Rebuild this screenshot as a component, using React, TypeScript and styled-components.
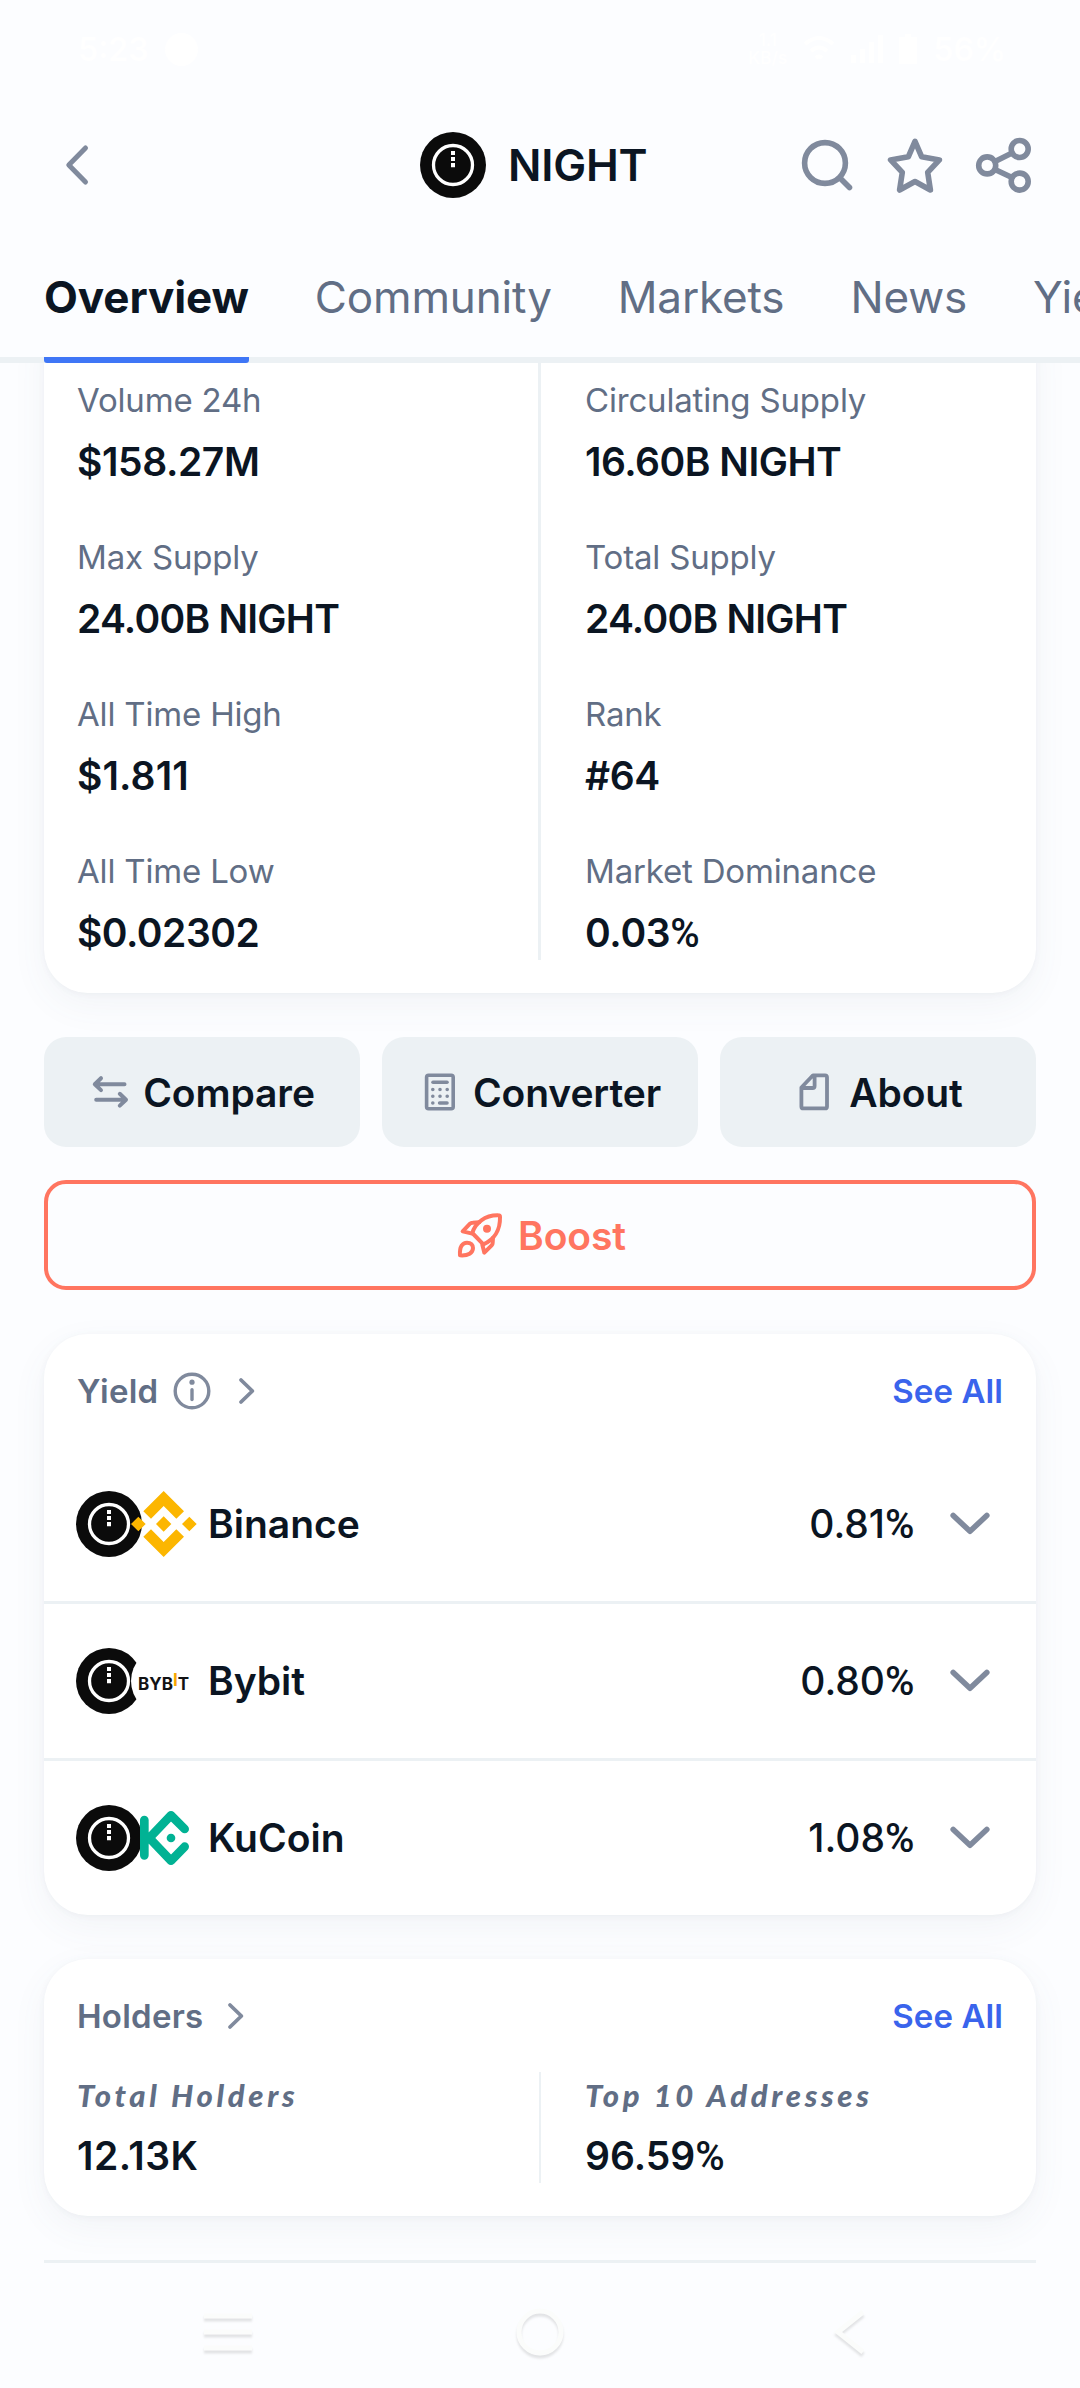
import React from "react";
import styled, { createGlobalStyle } from "styled-components";

const ink = "#0b1522";
const slate = "#616e85";
const iconGrey = "#808a9d";
const line = "#ecf1f4";
const blue = "#3a64ec";
const coral = "#ff7560";
const page = "#fcfdff";

const GlobalStyle = createGlobalStyle`
  *, *::before, *::after { box-sizing: border-box; }
  body {
    margin: 0;
    background: ${page};
    font-family: Inter, "Liberation Sans", sans-serif;
    color: ${ink};
  }
  svg { display: block; flex: none; }
`;

const Screen = styled.div`
  width: 1080px;
  height: 2388px;
  display: flex;
  flex-direction: column;
  overflow: hidden;
  background: ${page};
`;

const StatusBar = styled.div`
  height: 88px;
  flex: none;
  padding: 10px 74px 0 78px;
  display: flex;
  justify-content: space-between;
  align-items: center;
  color: #ffffff;
  font-size: 32px;
  font-weight: 600;
`;

const StatusGroup = styled.div`
  display: flex;
  align-items: center;
  gap: 16px;
`;

const StatusBadge = styled.span`
  width: 33px;
  height: 33px;
  border-radius: 50%;
  background: #ffffff;
`;

const NetSpeed = styled.span`
  display: flex;
  flex-direction: column;
  align-items: center;
  font-size: 17px;
  line-height: 18px;
`;

const Header = styled.header`
  height: 154px;
  flex: none;
  display: grid;
  grid-template-columns: 420px 1fr auto;
  align-items: center;
  padding-right: 44px;
`;

const BackButton = styled.div`
  padding-left: 62px;
`;

const Title = styled.div`
  display: flex;
  align-items: center;
  gap: 22px;
  font-size: 44px;
  font-weight: 600;
  line-height: 60px;
  letter-spacing: -0.2px;
`;

const HeaderActions = styled.div`
  display: flex;
  gap: 22px;
`;

const Tabs = styled.nav`
  height: 121px;
  flex: none;
  display: flex;
  gap: 66px;
  padding: 25px 0 0 44px;
  border-bottom: 6px solid ${line};
  white-space: nowrap;
`;

const Tab = styled.div<{ $active?: boolean }>`
  flex: none;
  height: 96px;
  font-size: 44px;
  line-height: 60px;
  letter-spacing: ${(p) => (p.$active ? "-0.1px" : "-0.15px")};
  font-weight: ${(p) => (p.$active ? 700 : 400)};
  color: ${(p) => (p.$active ? ink : slate)};
  border-bottom: 6px solid ${(p) => (p.$active ? "#3f76f6" : "transparent")};
  border-radius: 3px;
`;

const Body = styled.main`
  flex: none;
  height: 1900px;
  overflow: hidden;
  padding: 0 44px;
  display: flex;
  flex-direction: column;
`;

const Card = styled.section`
  flex: none;
  background: #ffffff;
  border-radius: 44px;
  box-shadow: 0 12px 36px rgba(88, 102, 126, 0.06), 0 1px 6px rgba(88, 102, 126, 0.06);
`;

const StatsCard = styled(Card)`
  margin-top: -60px;
  height: 690px;
  padding: 60px 0 33px;
  display: grid;
  grid-template-columns: 494px 1fr;
`;

const StatsColumn = styled.div<{ $divided?: boolean }>`
  padding: 15px 0 0 ${(p) => (p.$divided ? "44px" : "33px")};
  border-left: ${(p) => (p.$divided ? `3px solid ${line}` : "none")};
  display: flex;
  flex-direction: column;
  gap: 47px;
`;

const Stat = styled.div`
  display: flex;
  flex-direction: column;
  gap: 14px;
`;

const StatLabel = styled.div`
  font-size: 33px;
  line-height: 44px;
  letter-spacing: -0.18px;
  color: ${slate};
`;

const StatValue = styled.div<{ $track: number }>`
  font-size: 39px;
  line-height: 52px;
  font-weight: 600;
  letter-spacing: ${(p) => p.$track}px;
`;

const PercentSign = styled.span`
  font-family: Roboto, Inter, sans-serif;
  font-size: 40px;
  line-height: 1;
  font-weight: 500;
  letter-spacing: -0.5px;
`;

const Actions = styled.div`
  flex: none;
  display: grid;
  grid-template-columns: repeat(3, 316px);
  gap: 22px;
  margin-top: 44px;
`;

const ActionButton = styled.div<{ $gap: number }>`
  height: 110px;
  border-radius: 22px;
  background: ${line};
  display: flex;
  align-items: center;
  justify-content: center;
  gap: ${(p) => p.$gap}px;
  padding-left: ${(p) => p.$gap - 12}px;
  font-size: 39px;
  line-height: 52px;
  font-weight: 600;
`;

const ActionLabel = styled.span`
  padding-top: 2px;
  letter-spacing: -0.1px;
`;

const BoostButton = styled(ActionButton)`
  flex: none;
  margin-top: 33px;
  background: ${page};
  border: 4px solid ${coral};
  color: ${coral};
`;

const YieldCard = styled(Card)`
  margin-top: 44px;
  height: 581px;
`;

const CardHead = styled.div`
  height: 113px;
  padding: 0 33px;
  display: flex;
  align-items: center;
  justify-content: space-between;
  font-size: 33px;
  line-height: 44px;
  font-weight: 600;
  color: ${slate};
`;

const HeadTitle = styled.div`
  display: flex;
  align-items: center;
  letter-spacing: 0.25px;
`;

const SeeAll = styled.div`
  color: ${blue};
  letter-spacing: 0.1px;
`;

const YieldRow = styled.div`
  height: 157px;
  display: flex;
  align-items: center;
  padding: 0 44px 0 32px;
  border-bottom: 3px solid ${line};
  font-size: 39px;
  line-height: 52px;
  font-weight: 500;
  &:last-child { border-bottom-color: transparent; }
`;

const LogoPair = styled.div`
  display: flex;
  width: 121px;
  margin-right: 11px;
  & > :last-child { margin-left: -11px; }
`;

const ExchangeName = styled.div`
  flex: 1;
  font-weight: 600;
`;

const Rate = styled.div`
  margin-right: 34px;
`;

const BybitMark = styled.div`
  width: 66px;
  height: 66px;
  flex: none;
  border-radius: 50%;
  background: #ffffff;
  display: flex;
  align-items: center;
  padding: 5px 0 0 7px;
  color: #121214;
  font-size: 17px;
  line-height: 20px;
  font-weight: 700;
  letter-spacing: 0;
`;

const BybitAccent = styled.span`
  color: #f7a600;
  transform: translateY(-4px);
`;

const HoldersCard = styled(Card)`
  margin-top: 44px;
  height: 257px;
`;

const HoldersGrid = styled.div`
  display: grid;
  grid-template-columns: 495px 1fr;
  height: 111px;
`;

const HoldersCell = styled.div<{ $divided?: boolean }>`
  padding: 0 0 0 ${(p) => (p.$divided ? "44px" : "33px")};
  border-left: ${(p) => (p.$divided ? `2px solid ${line}` : "none")};
`;

const HoldersLabel = styled.div`
  font-family: Lato, "Open Sans", sans-serif;
  font-style: italic;
  font-weight: 900;
  font-size: 31px;
  line-height: 44px;
  letter-spacing: 3.7px;
  color: ${slate};
  padding-top: 1px;
`;

const HoldersValue = styled.div<{ $track: number }>`
  font-size: 39px;
  line-height: 52px;
  font-weight: 600;
  letter-spacing: ${(p) => p.$track}px;
  margin-top: 13px;
`;

const EndRule = styled.div`
  flex: none;
  height: 3px;
  margin-top: 44px;
  background: ${line};
`;

const SystemNav = styled.footer`
  flex: 1;
  display: flex;
  justify-content: space-between;
  align-items: center;
  padding: 12px 198px 0;
  svg { filter: drop-shadow(0 3px 1px rgba(0, 0, 0, 0.1)); }
`;

const Coin = () => (
  <svg width="66" height="66" viewBox="0 0 66 66">
    <circle cx="33" cy="33" r="33" fill="#0b0b0b" />
    <circle cx="33" cy="33" r="19.5" fill="none" stroke="#fff" strokeWidth="3.3" />
    <path d="M31 19h4v4h-4zM31 25h4v4h-4zM31 31h4v4.2h-4z" fill="#fff" />
  </svg>
);

const strokeProps = {
  fill: "none",
  stroke: iconGrey,
  strokeLinecap: "round" as const,
  strokeLinejoin: "round" as const,
};

const BackIcon = () => (
  <svg width="30" height="44" viewBox="0 0 30 44" {...strokeProps} strokeWidth="5">
    <path d="M23.5 5L6.8 22l16.7 17" />
  </svg>
);

const SearchIcon = () => (
  <svg width="66" height="66" viewBox="0 0 66 66" {...strokeProps} strokeWidth="5.6">
    <circle cx="31" cy="31" r="20.4" />
    <path d="M46.5 46.5l9 9" />
  </svg>
);

const StarIcon = () => (
  <svg width="66" height="66" viewBox="0 0 66 66" {...strokeProps} strokeWidth="5.6">
    <path d="M33 9.3L39.7 24.8L57.4 27.9L45.7 40.4L48.4 58L33 49.5L17.6 58L20.3 40.4L8.6 27.9L26.3 24.8Z" />
  </svg>
);

const ShareIcon = () => (
  <svg width="66" height="66" viewBox="0 0 66 66" {...strokeProps} strokeWidth="5.6">
    <circle cx="49.7" cy="17" r="8.5" />
    <circle cx="17.2" cy="33.4" r="8.5" />
    <circle cx="49.7" cy="49.6" r="8.5" />
    <path d="M25 29.4L42 21M25 37.4L42 45.6" />
  </svg>
);

const CompareIcon = () => (
  <svg width="42" height="38" viewBox="0 0 42 38" {...strokeProps} strokeWidth="4">
    <path d="M35.5 11.3H5.8M12 5.2L5.8 11.3L12 17.1M7.2 26.7H37M30.8 20.8L37 26.7L30.8 32.6" />
  </svg>
);

const CalculatorIcon = () => (
  <svg width="38" height="38" viewBox="0 0 38 38" {...strokeProps} strokeWidth="3.6">
    <rect x="5.6" y="2.2" width="26.6" height="33.6" rx="2" />
    <path d="M12 9.2H26" />
    <path d="M11.8 16.5h.01M19 16.5h.01M26.2 16.5h.01M11.8 23.3h.01M19 23.3h.01M26.2 23.3h.01M11.8 30h.01M18.6 30h7.4" />
  </svg>
);

const PageIcon = () => (
  <svg width="38" height="38" viewBox="0 0 38 38" {...strokeProps} strokeWidth="3.8">
    <path d="M17 2.3H29a2 2 0 0 1 2 2V33.4a2 2 0 0 1-2 2H7.4a2 2 0 0 1-2-2V14.5ZM18.6 3V13a2 2 0 0 1-2 2H6" />
  </svg>
);

const RocketIcon = () => (
  <svg
    width="46"
    height="46"
    viewBox="50 453 138 138"
    fill="none"
    stroke={coral}
    strokeWidth="12"
    strokeLinecap="round"
    strokeLinejoin="round"
  >
    <path d="M96 516C104 486 134 462 174 463Q179 463 179 468C180 506 162 536 129 550Z" />
    <path d="M117 484L97 485Q92 485 89 488L67 511L96 518M158 530L157 546Q157 550 154 553L132 575L126 551" />
    <path d="M59 583C57 556 67 545 80 545C92 545 98 552 98 561C98 575 84 585 59 583Z" />
    <circle cx="140" cy="503" r="6" fill={coral} />
  </svg>
);

const InfoIcon = () => (
  <svg width="38" height="38" viewBox="0 0 38 38" {...strokeProps} strokeWidth="3.4">
    <circle cx="19" cy="19" r="16.8" />
    <path d="M19 17.8V27.5" />
    <circle cx="19" cy="10.2" r="2.6" fill={iconGrey} stroke="none" />
  </svg>
);

const ChevronRight = () => (
  <svg width="20" height="30" viewBox="0 0 20 30" {...strokeProps} strokeWidth="3.8">
    <path d="M4 4L15.4 15L4 26" />
  </svg>
);

const ChevronDown = () => (
  <svg width="44" height="30" viewBox="0 0 44 30" {...strokeProps} strokeWidth="5.6">
    <path d="M5.2 6.5L22 22.3L38.8 6.5" />
  </svg>
);

const BinanceLogo = () => (
  <svg width="66" height="66" viewBox="213 63 198 198" fill="#fcb600">
    <path d="M311 63L372 124L349 146L311 108L273 146L250 124ZM311 261L372 200L349 178L311 216L273 178L250 200Z" />
    <path d="M311 139L334 162L311 185L288 162ZM235 140L257 162L235 184L213 162ZM388 140L410 162L388 184L366 162Z" />
  </svg>
);

const KucoinLogo = () => (
  <svg
    width="66"
    height="66"
    viewBox="213 1005 198 198"
    fill="none"
    stroke="#01b294"
    strokeWidth="26"
    strokeLinecap="round"
    strokeLinejoin="round"
  >
    <path d="M253 1050V1156M374 1077L333 1036L268 1104L333 1172L374 1130" />
    <circle cx="333" cy="1104" r="13" fill="#01b294" stroke="none" />
  </svg>
);

const BybitLogo = () => (
  <BybitMark>
    <span>BYB</span>
    <BybitAccent>I</BybitAccent>
    <span>T</span>
  </BybitMark>
);

const WifiIcon = () => (
  <svg width="32" height="28" viewBox="0 0 32 28" fill="none" stroke="#fff" strokeWidth="4">
    <path d="M2 9Q16-3 30 9M8 16Q16 9 24 16M13 23Q16 20 19 23" />
  </svg>
);

const SignalIcon = () => (
  <svg width="32" height="28" viewBox="0 0 32 28" fill="#fff">
    <path d="M0 20h5v8H0zM9 14h5v14H9zM18 7h5v21h-5zM27 0h5v28h-5z" />
  </svg>
);

const BatteryIcon = () => (
  <svg width="18" height="30" viewBox="0 0 18 30" fill="#fff">
    <path d="M6 0h6v3h6v27H0V3h6z" />
  </svg>
);

const Figure = ({ text }: { text: string }) =>
  text.endsWith("%") ? (
    <>
      {text.slice(0, -1)}
      <PercentSign>%</PercentSign>
    </>
  ) : (
    <>{text}</>
  );

type StatItem = { label: string; value: string; track: number };

const tabs = ["Overview", "Community", "Markets", "News", "Yield"];

const leftStats: StatItem[] = [
  { label: "Volume 24h", value: "$158.27M", track: -0.4 },
  { label: "Max Supply", value: "24.00B NIGHT", track: -0.75 },
  { label: "All Time High", value: "$1.811", track: 0.1 },
  { label: "All Time Low", value: "$0.02302", track: -0.5 },
];

const rightStats: StatItem[] = [
  { label: "Circulating Supply", value: "16.60B NIGHT", track: -0.5 },
  { label: "Total Supply", value: "24.00B NIGHT", track: -0.75 },
  { label: "Rank", value: "#64", track: -0.4 },
  { label: "Market Dominance", value: "0.03%", track: -0.3 },
];

const yields = [
  { name: "Binance", rate: "0.81%", Logo: BinanceLogo },
  { name: "Bybit", rate: "0.80%", Logo: BybitLogo },
  { name: "KuCoin", rate: "1.08%", Logo: KucoinLogo },
];

const Spacer = styled.span<{ $w: number }>`
  width: ${(p) => p.$w}px;
`;

const renderStats = (stats: StatItem[]) =>
  stats.map(({ label, value, track }) => (
    <Stat key={label}>
      <StatLabel>{label}</StatLabel>
      <StatValue $track={track}>
        <Figure text={value} />
      </StatValue>
    </Stat>
  ));

export default function App() {
  return (
    <Screen>
      <GlobalStyle />
      <StatusBar>
        <StatusGroup>
          <span>5:23</span>
          <StatusBadge />
        </StatusGroup>
        <StatusGroup>
          <NetSpeed>
            <span>1.1</span>
            <span>KB/s</span>
          </NetSpeed>
          <WifiIcon />
          <SignalIcon />
          <BatteryIcon />
          <span>56%</span>
        </StatusGroup>
      </StatusBar>

      <Header>
        <BackButton>
          <BackIcon />
        </BackButton>
        <Title>
          <Coin />
          <span>NIGHT</span>
        </Title>
        <HeaderActions>
          <SearchIcon />
          <StarIcon />
          <ShareIcon />
        </HeaderActions>
      </Header>

      <Tabs>
        {tabs.map((t, i) => (
          <Tab key={t} $active={i === 0}>
            {t}
          </Tab>
        ))}
      </Tabs>

      <Body>
        <StatsCard>
          <StatsColumn>{renderStats(leftStats)}</StatsColumn>
          <StatsColumn $divided>{renderStats(rightStats)}</StatsColumn>
        </StatsCard>

        <Actions>
          <ActionButton $gap={12}>
            <CompareIcon />
            <ActionLabel>Compare</ActionLabel>
          </ActionButton>
          <ActionButton $gap={14}>
            <CalculatorIcon />
            <ActionLabel>Converter</ActionLabel>
          </ActionButton>
          <ActionButton $gap={15}>
            <PageIcon />
            <ActionLabel>About</ActionLabel>
          </ActionButton>
        </Actions>

        <BoostButton $gap={15}>
          <RocketIcon />
          <ActionLabel>Boost</ActionLabel>
        </BoostButton>

        <YieldCard>
          <CardHead>
            <HeadTitle>
              Yield
              <Spacer $w={15} />
              <InfoIcon />
              <Spacer $w={26} />
              <ChevronRight />
            </HeadTitle>
            <SeeAll>See All</SeeAll>
          </CardHead>
          {yields.map(({ name, rate, Logo }) => (
            <YieldRow key={name}>
              <LogoPair>
                <Coin />
                <Logo />
              </LogoPair>
              <ExchangeName>{name}</ExchangeName>
              <Rate>
                <Figure text={rate} />
              </Rate>
              <ChevronDown />
            </YieldRow>
          ))}
        </YieldCard>

        <HoldersCard>
          <CardHead>
            <HeadTitle>
              Holders
              <Spacer $w={23} />
              <ChevronRight />
            </HeadTitle>
            <SeeAll>See All</SeeAll>
          </CardHead>
          <HoldersGrid>
            <HoldersCell>
              <HoldersLabel>Total Holders</HoldersLabel>
              <HoldersValue $track={0.5}>12.13K</HoldersValue>
            </HoldersCell>
            <HoldersCell $divided>
              <HoldersLabel>Top 10 Addresses</HoldersLabel>
              <HoldersValue $track={0}>
                <Figure text="96.59%" />
              </HoldersValue>
            </HoldersCell>
          </HoldersGrid>
        </HoldersCard>

        <EndRule />
      </Body>

      <SystemNav>
        <svg width="60" height="50" viewBox="0 0 60 50" stroke="#fbfcfb" strokeWidth="5">
          <path d="M6 9H54M6 25H54M6 41H54" />
        </svg>
        <svg width="60" height="50" viewBox="0 0 60 50" stroke="#fbfcfb" strokeWidth="5" fill="none">
          <circle cx="30" cy="25" r="21" />
        </svg>
        <svg width="60" height="50" viewBox="0 0 60 50" stroke="#fbfcfb" strokeWidth="5" fill="none">
          <path d="M41 5L16 25L41 45" />
        </svg>
      </SystemNav>
    </Screen>
  );
}
